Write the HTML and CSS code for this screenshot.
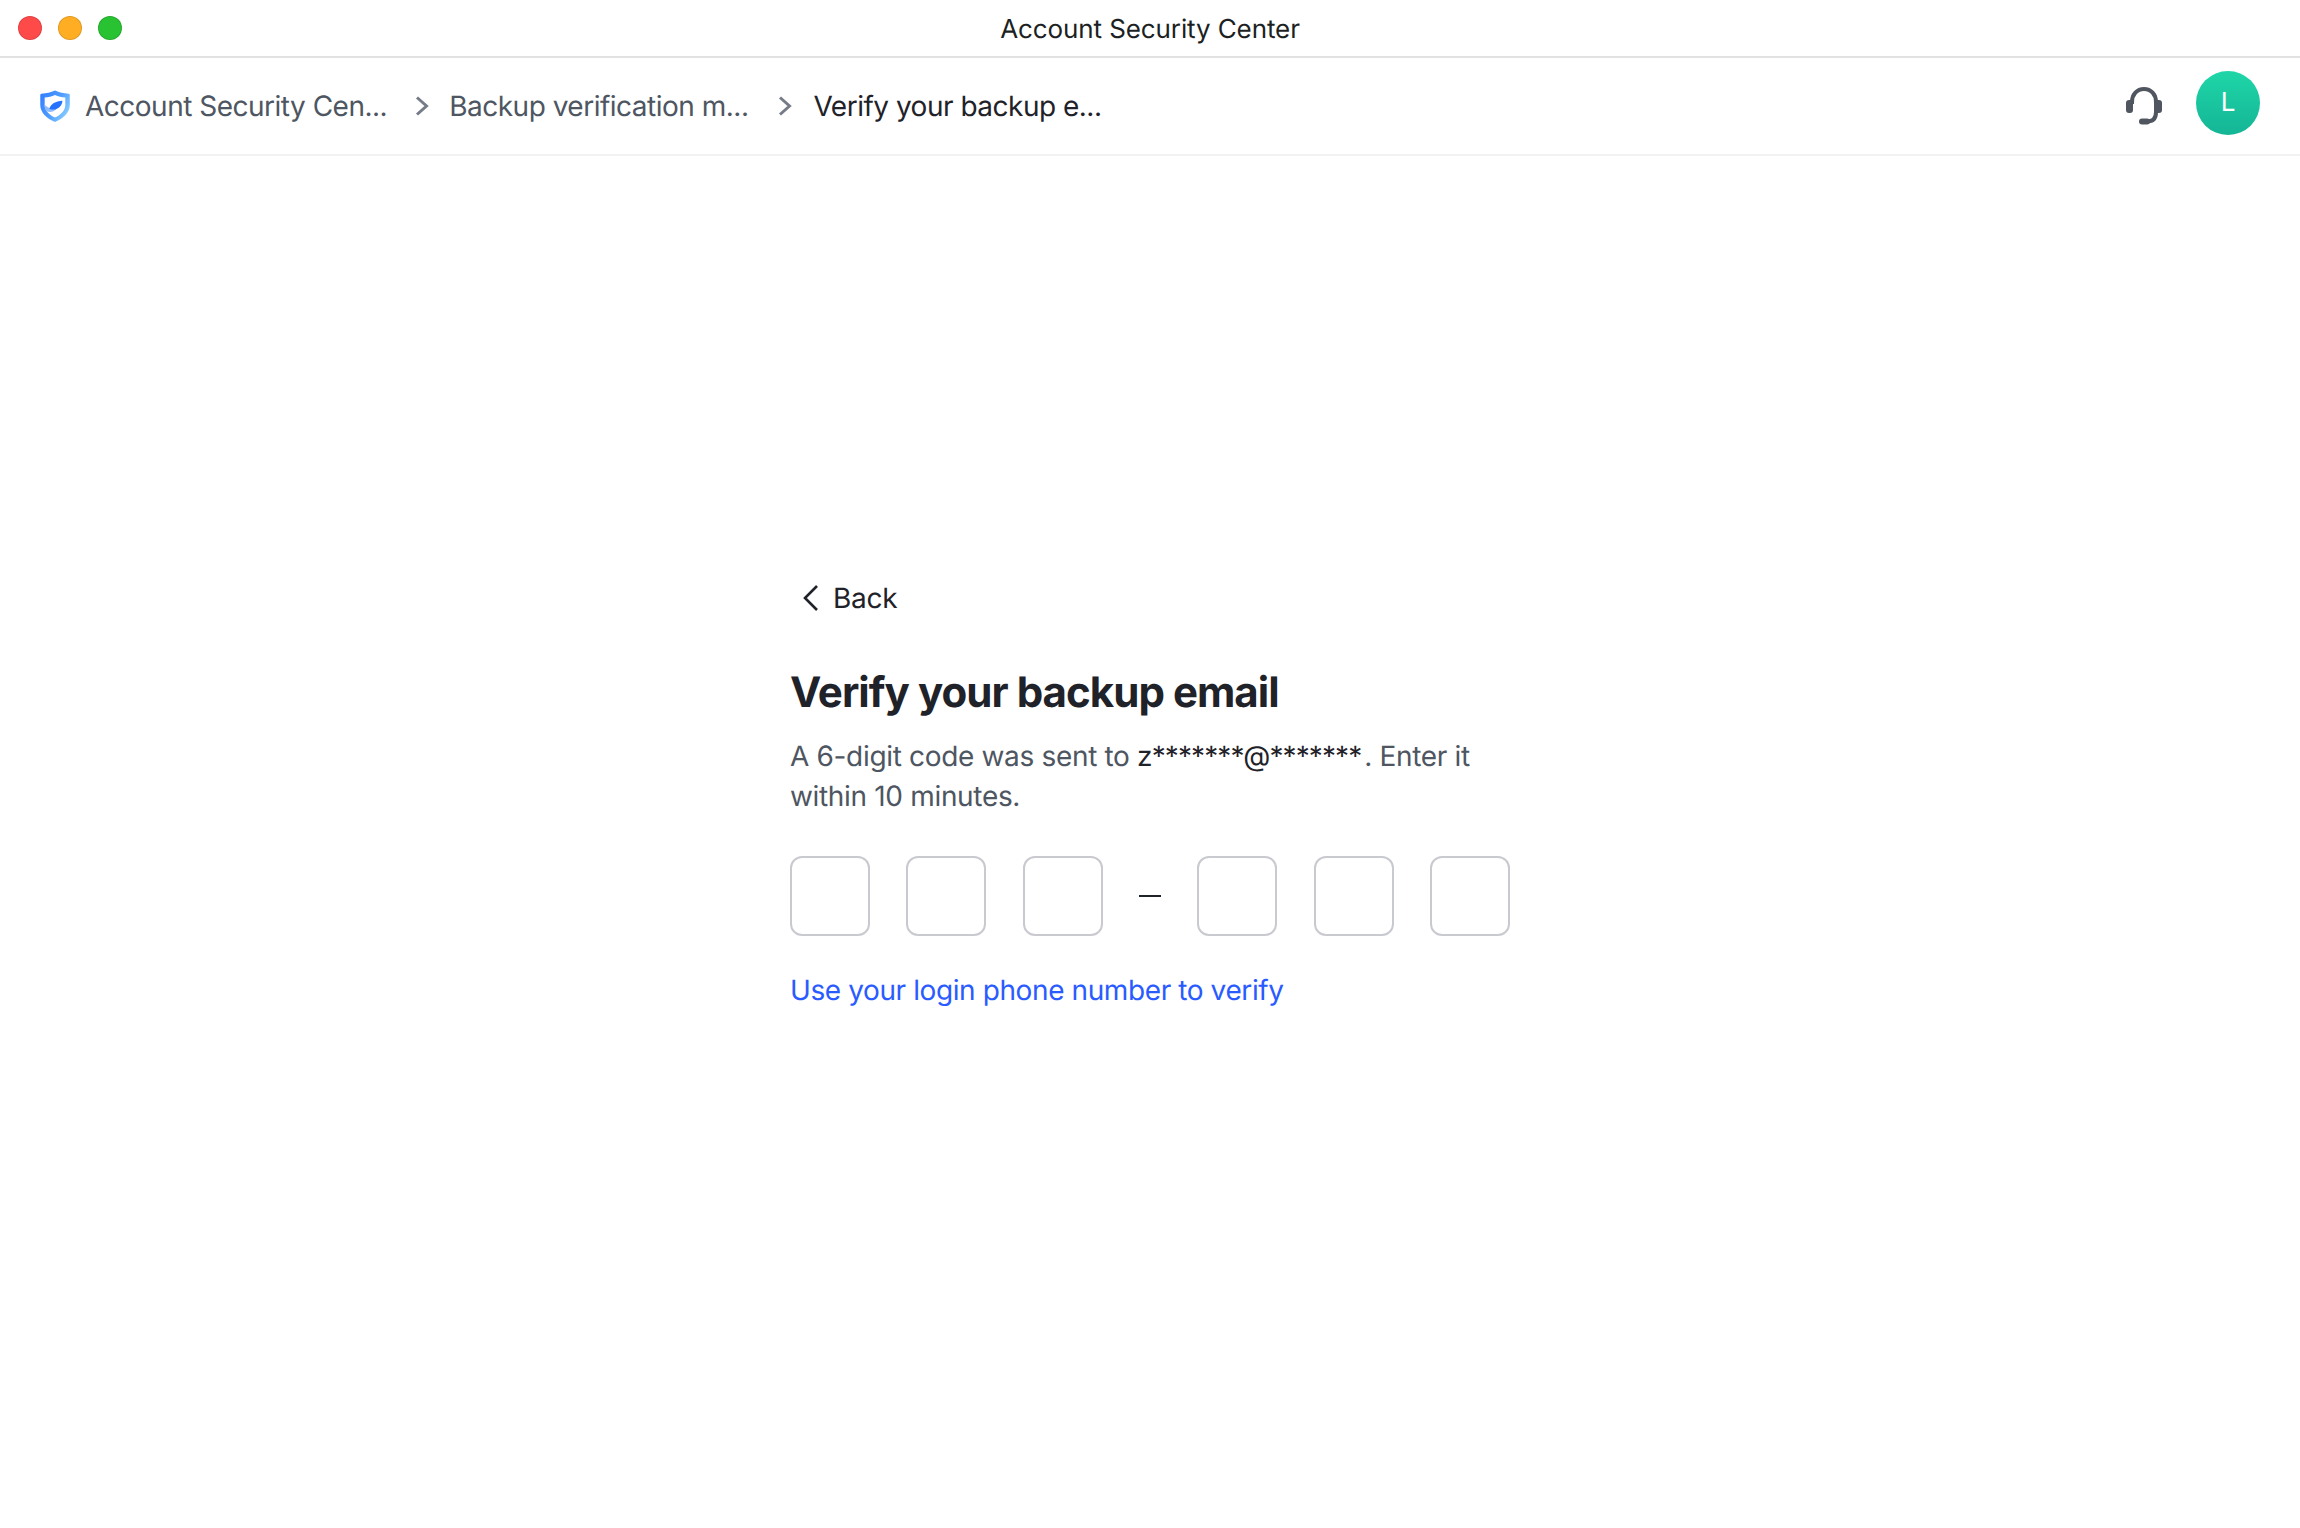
FILE: index.html
```html
<!DOCTYPE html>
<html lang="en">
<head>
<meta charset="utf-8">
<title>Account Security Center</title>
<link rel="stylesheet" href="styles.css">
</head>
<body>
<header class="titlebar">
  <div class="lights">
    <span class="light light-red"></span>
    <span class="light light-amber"></span>
    <span class="light light-green"></span>
  </div>
  <div class="window-title">Account Security Center</div>
</header>
<nav class="navbar">
  <div class="crumbs">
    <svg class="shield" viewBox="0 0 32 36" aria-hidden="true">
      <defs>
        <linearGradient id="sg" x1="0" y1="0" x2="1" y2="0.6">
          <stop offset="0" stop-color="#2f7bff"/>
          <stop offset="0.6" stop-color="#4f9dff"/>
          <stop offset="1" stop-color="#86ccff"/>
        </linearGradient>
      </defs>
      <path d="M16 1.5 C20.5 3.5 25 4.5 30.5 4.8 C31.5 4.9 31.8 5.5 31.8 6.5 L31.8 17 C31.8 25 25 31.5 16 35 C7 31.5 .3 25 .3 17 L.3 6.5 C.3 5.5 .6 4.9 1.6 4.8 C7 4.5 11.5 3.5 16 1.5 Z" fill="url(#sg)"/>
      <path d="M16 6.2 C19.5 7.8 23 8.6 27 8.9 L27 17 C27 22.8 22.3 27.5 16 30.3 C9.7 27.5 5 22.8 5 17 L5 8.9 C9 8.6 12.5 7.8 16 6.2 Z" fill="#fff"/>
      <path d="M4.6 16.5 C8.5 20.5 13 21.6 18 20 C15.8 24 11 25.5 7 23.6 C5.4 21.6 4.6 19 4.6 16.5 Z" fill="#8fbcff"/>
      <path d="M10 20.8 C11.5 16 16.5 12.5 24 12.3 C23.5 17.5 19.5 21.6 14.5 21.8 C12.8 21.9 11.2 21.5 10 20.8 Z" fill="#2673ff"/>
    </svg>
    <span class="crumb">Account Security Cen...</span>
    <svg class="crumb-sep" viewBox="0 0 14 20" aria-hidden="true"><path d="M2 1.5 L11.5 10 L2 18.5"/></svg>
    <span class="crumb">Backup verification m...</span>
    <svg class="crumb-sep crumb-sep-last" viewBox="0 0 14 20" aria-hidden="true"><path d="M2 1.5 L11.5 10 L2 18.5"/></svg>
    <span class="crumb crumb-current">Verify your backup e...</span>
  </div>
  <div class="nav-actions">
    <svg class="headset" viewBox="0 0 36 38" aria-hidden="true">
      <path class="headset-line" d="M6 17 V15 C6 7.5 11 2 18 2 C25 2 30 7.5 30 15 V25 C30 31 27 34.5 21 34.5 H16"/>
      <rect class="headset-fill" x="0" y="13" width="7" height="13" rx="3"/>
      <rect class="headset-fill" x="29" y="13" width="7" height="13" rx="3"/>
      <rect class="headset-fill" x="13" y="31.5" width="11" height="6" rx="3"/>
    </svg>
    <div class="avatar">L</div>
  </div>
</nav>
<main class="content">
  <section class="panel">
    <a class="back">
      <svg class="back-icon" viewBox="0 0 16 28" aria-hidden="true"><path d="M14 2 L2 14 L14 26"/></svg>
      <span>Back</span>
    </a>
    <h1 class="heading">Verify your backup email</h1>
    <p class="desc">A 6-digit code was sent to <span class="addr">z*******@*******</span>. Enter it within 10 minutes.</p>
    <div class="code">
      <div class="cell"></div>
      <div class="cell"></div>
      <div class="cell"></div>
      <div class="dash"></div>
      <div class="cell"></div>
      <div class="cell"></div>
      <div class="cell"></div>
    </div>
    <a class="alt-link">Use your login phone number to verify</a>
  </section>
</main>
</body>
</html>
```
FILE: styles.css
```css
* { box-sizing: border-box; }
html, body { margin: 0; padding: 0; }
body {
  width: 2300px;
  height: 1528px;
  background: #fff;
  font-family: Inter, "Liberation Sans", sans-serif;
  color: #1f2329;
  overflow: hidden;
  text-rendering: geometricPrecision;
}
.titlebar {
  position: relative;
  height: 58px;
  padding-top: 2px;
  border-bottom: 2px solid #e2e2e2;
  display: flex;
  align-items: center;
  justify-content: center;
}
.lights {
  position: absolute;
  left: 18px;
  top: 16px;
  display: flex;
  gap: 16px;
}
.light {
  width: 24px;
  height: 24px;
  border-radius: 50%;
  border: 1px solid rgba(0,0,0,.12);
}
.light-red { background: #ff4a4a; }
.light-amber { background: #ffae24; }
.light-green { background: #28c232; }
.window-title {
  font-size: 26px;
  letter-spacing: -0.1px;
  color: #1c1f23;
}
.navbar {
  height: 98px;
  border-bottom: 2px solid #f2f2f2;
  padding: 0 40px;
  display: flex;
  align-items: center;
  justify-content: space-between;
}
.crumbs {
  display: flex;
  align-items: center;
  font-size: 28px;
  letter-spacing: -0.5px;
  color: #4e5662;
}
.shield { width: 30px; height: 34px; margin-right: 15px; }
.crumb-sep {
  width: 14px;
  height: 20px;
  margin: 0 20px 0 28px;
  fill: none;
  stroke: #757c88;
  stroke-width: 3;
}
.crumb-sep-last { margin: 0 21px 0 30px; }
.crumb-current { color: #1f2329; }
.nav-actions { display: flex; align-items: center; gap: 34px; margin-top: -6px; }
.headset { width: 36px; height: 38px; margin-top: 6px; }
.headset-line { fill: none; stroke: #50565f; stroke-width: 4; }
.headset-fill { fill: #50565f; }
.avatar {
  width: 64px;
  height: 64px;
  border-radius: 50%;
  padding-bottom: 2px;
  background: linear-gradient(180deg, #1fd6a8, #14b595);
  color: #fff;
  font-size: 26px;
  display: flex;
  align-items: center;
  justify-content: center;
}
.content {
  display: flex;
  justify-content: center;
  padding-top: 422px;
}
.panel { width: 720px; }
.back {
  display: flex;
  align-items: center;
  gap: 14px;
  padding-left: 13px;
  height: 40px;
  font-size: 28px;
  letter-spacing: -0.3px;
  color: #1f2329;
}
.back-icon {
  width: 16px;
  height: 28px;
  fill: none;
  stroke: #1f2329;
  stroke-width: 2.6;
}
.heading {
  margin: 47px 0 0;
  font-size: 42px;
  line-height: 56px;
  font-weight: 700;
  letter-spacing: -0.95px;
  color: #1f2329;
}
.desc {
  margin: 15px 0 0;
  font-size: 28px;
  line-height: 40px;
  letter-spacing: -0.33px;
  color: #4e5662;
}
.addr { color: #1f2329; letter-spacing: -0.9px; margin-right: 3px; }
.code {
  margin-top: 40px;
  display: flex;
  align-items: center;
  justify-content: space-between;
}
.cell {
  width: 80px;
  height: 80px;
  border: 2px solid #c8cad0;
  border-radius: 12px;
}
.dash { width: 22px; height: 2px; background: #1f2329; }
.alt-link {
  display: block;
  margin-top: 34px;
  font-size: 28px;
  line-height: 40px;
  letter-spacing: -0.4px;
  color: #2a5bff;
}
```
